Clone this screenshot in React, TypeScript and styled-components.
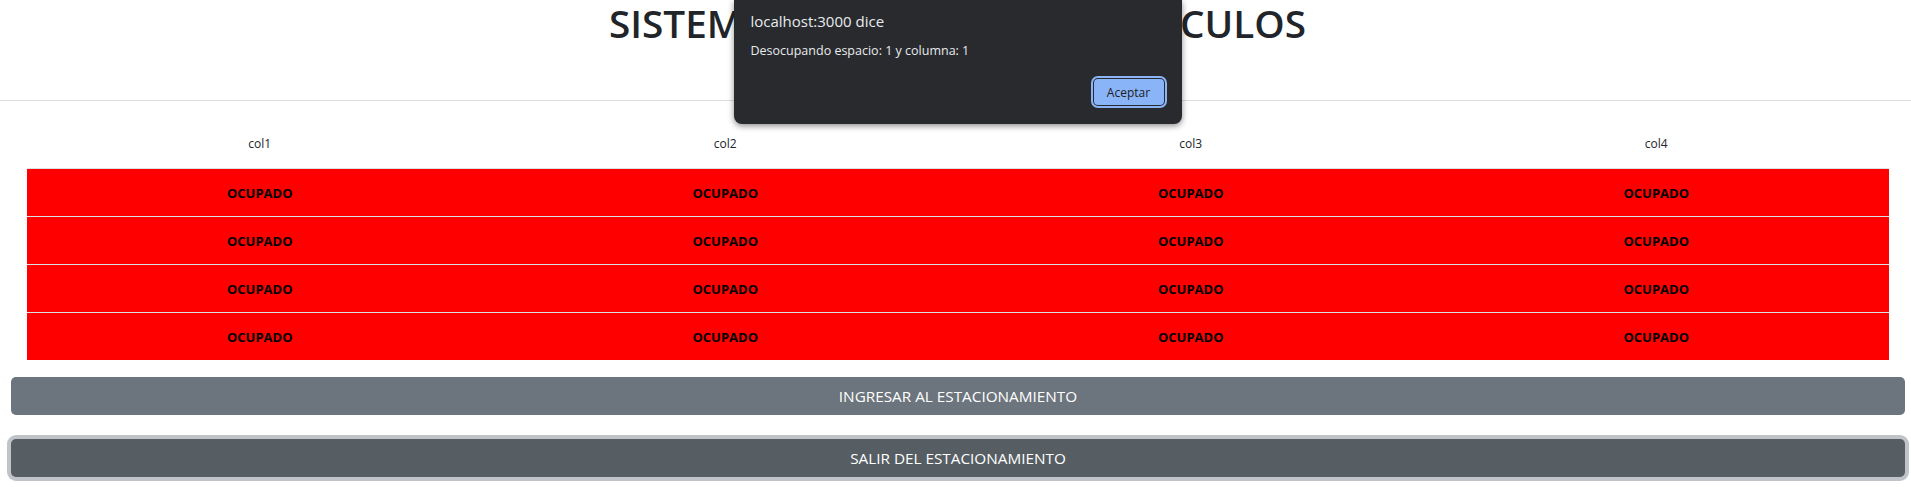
import { createGlobalStyle, styled } from "styled-components";

const GlobalStyle = createGlobalStyle`
  html, body {
    margin: 0;
    padding: 0;
    background: #fff;
    color: #212529;
    font-family: "Open Sans", "Noto Sans", sans-serif;
  }
`;

const Page = styled.div`
  position: relative;
  width: 100%;
  min-height: 487px;
`;

const Header = styled.header`
  height: 100px;
  padding-left: 4px;
  border-bottom: 1px solid #dddddd;
  text-align: center;
`;

const Title = styled.h1`
  margin: 0;
  padding-top: 2px;
  font-size: 38.7px;
  line-height: 42px;
  font-weight: 600;
  color: #212529;
`;

const TableWrap = styled.div`
  padding: 21px 22px 0 27px;
`;

const Table = styled.table`
  width: 100%;
  border-collapse: collapse;
  table-layout: fixed;
`;

const HeadCell = styled.th`
  height: 42px;
  padding: 0 0 4px;
  font-size: 12px;
  font-weight: 400;
  color: #212529;
  text-align: center;
  vertical-align: middle;
`;

const SlotCell = styled.td<{ $busy: boolean }>`
  height: 47px;
  padding: 0;
  border-top: 1px solid #dee2e6;
  background: ${(props) => (props.$busy ? "#ff0000" : "#ffffff")};
  color: #000;
  font-size: 13px;
  font-weight: 700;
  text-align: center;
  vertical-align: middle;
`;

const Actions = styled.div`
  display: flex;
  flex-direction: column;
  gap: 24px;
  padding: 17px 6px 10px 11px;
`;

const ActionBtn = styled.button<{ $active?: boolean }>`
  display: block;
  width: 100%;
  height: 38px;
  padding: 6px 12px;
  border: none;
  border-radius: 5px;
  background: ${(props) => (props.$active ? "#565e64" : "#6c757d")};
  box-shadow: ${(props) => (props.$active ? "0 0 0 4px rgba(130, 138, 145, 0.5)" : "none")};
  color: #fff;
  font-family: "Open Sans", "Noto Sans", sans-serif;
  font-size: 15.3px;
  line-height: 24px;
  cursor: pointer;
`;

const AlertBox = styled.div`
  position: absolute;
  top: 0;
  left: calc(50% - 222px);
  width: 448px;
  height: 124px;
  box-sizing: border-box;
  padding: 11px 15px 16px 17px;
  display: flex;
  flex-direction: column;
  background: #292a2d;
  border-radius: 0 0 8px 8px;
  box-shadow: 0 2px 6px rgba(0, 0, 0, 0.45);
  color: #e8eaed;
`;

const AlertTitle = styled.div`
  font-size: 15px;
  line-height: 20px;
`;

const AlertText = styled.div`
  margin-top: 11px;
  font-size: 12.5px;
  line-height: 18px;
`;

const AlertFooter = styled.div`
  margin-top: auto;
  display: flex;
  justify-content: flex-end;
`;

const AlertBtn = styled.button`
  width: 70px;
  height: 26px;
  margin: 3px;
  padding: 0;
  border: none;
  border-radius: 4px;
  background: #8ab4f8;
  outline: 2px solid #8ab4f8;
  outline-offset: 1px;
  color: #202124;
  font-family: "Open Sans", "Noto Sans", sans-serif;
  font-size: 12px;
`;

const columns = ["col1", "col2", "col3", "col4"];
const rows = [1, 2, 3, 4];

function App() {
  return (
    <Page>
      <GlobalStyle />
      <Header>
        <Title>SISTEMA DE PARQUEO DE VEHICULOS</Title>
      </Header>

      <TableWrap>
        <Table>
          <thead>
            <tr>
              {columns.map((col) => (
                <HeadCell key={col}>{col}</HeadCell>
              ))}
            </tr>
          </thead>
          <tbody>
            {rows.map((row) => (
              <tr key={row}>
                {columns.map((col) => (
                  <SlotCell key={col} $busy>
                    OCUPADO
                  </SlotCell>
                ))}
              </tr>
            ))}
          </tbody>
        </Table>
      </TableWrap>

      <Actions>
        <ActionBtn>INGRESAR AL ESTACIONAMIENTO</ActionBtn>
        <ActionBtn $active>SALIR DEL ESTACIONAMIENTO</ActionBtn>
      </Actions>

      <AlertBox>
        <AlertTitle>localhost:3000 dice</AlertTitle>
        <AlertText>Desocupando espacio: 1 y columna: 1</AlertText>
        <AlertFooter>
          <AlertBtn>Aceptar</AlertBtn>
        </AlertFooter>
      </AlertBox>
    </Page>
  );
}

export default App;
